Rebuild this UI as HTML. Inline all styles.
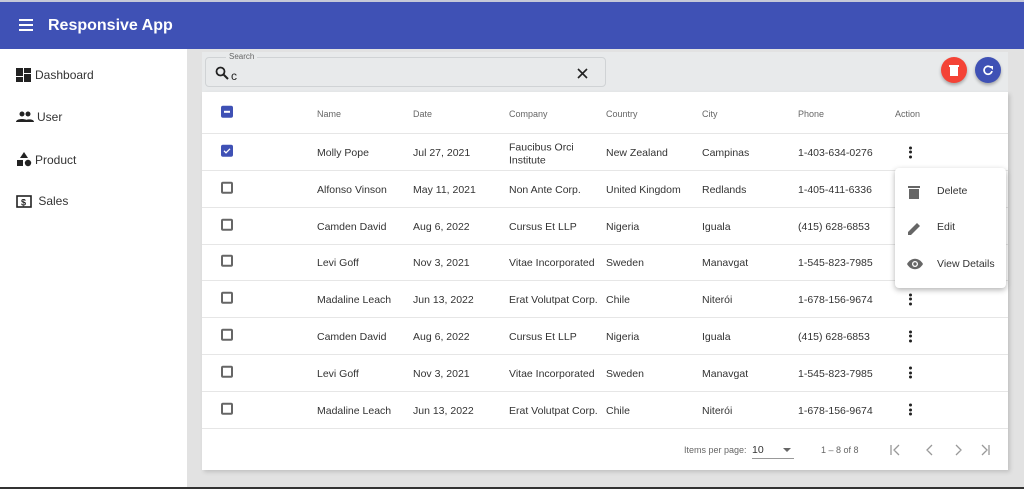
<!DOCTYPE html><html><head><style>
*{box-sizing:border-box;margin:0;padding:0}
body{width:1024px;height:489px;overflow:hidden;font-family:"Liberation Sans",sans-serif;background:#e3e3e3;position:relative}
.top{position:absolute;left:0;top:0;width:1024px;height:49px;background:#3f51b5;border-top:2px solid #c5c8d8}
.top .t{position:absolute;left:48px;top:15px;color:#fff;font-size:16px;font-weight:bold}
.side{position:absolute;left:0;top:49px;width:187px;height:440px;background:#fff}
.side div{position:absolute;left:16px;font-size:12px;color:#333;display:flex;align-items:center;gap:3px}
.main{position:absolute;left:187px;top:49px;width:837px;height:438px;background:#e2e2e2}
.bar{position:absolute;left:202px;top:52px;width:806px;height:40px;background:#e8eaeb}
.sf{position:absolute;left:205px;top:57px;width:401px;height:30px;border:1px solid #d0d3d5;border-radius:4px}
.card{position:absolute;left:202px;top:92px;width:806px;height:378px;background:#fff;box-shadow:2px 2px 4px rgba(0,0,0,.15)}
.row{position:absolute;left:0;width:806px;border-bottom:1px solid #e6e6e6;font-size:10.5px;color:#333}
.row span{position:absolute;top:50%;transform:translateY(-40%);line-height:13px}
.hd span{color:#666;font-size:9px}
.cb{position:absolute;left:19px;width:12px;height:12px;border:2px solid #666;border-radius:2px;top:50%;transform:translateY(-60%)}
.dots{position:absolute;left:707px;top:50%;transform:translateY(-50%);width:3px}
.dots i{display:block;width:3px;height:3px;background:#222;border-radius:50%;margin:1.5px 0}
.menu{position:absolute;left:895px;top:168px;width:111px;height:120px;background:#fff;border-radius:4px;box-shadow:0 2px 6px rgba(0,0,0,.3)}
.menu div{position:absolute;left:42px;font-size:10.5px;color:#333}
.fab{position:absolute;top:57px;width:26px;height:26px;border-radius:50%;box-shadow:0 2px 3px rgba(0,0,0,.3)}
</style></head><body>
<div class="top"><svg style="position:absolute;left:19px;top:17px" width="14" height="12"><rect y="0" width="14" height="2" fill="#fff"/><rect y="5" width="14" height="2" fill="#fff"/><rect y="10" width="14" height="2" fill="#fff"/></svg><div class="t">Responsive App</div></div>
<div class="side">
<div style="top:19px"><svg width="16" height="14"><rect x="0" y="0" width="7" height="8" fill="#222"/><rect x="0" y="9" width="7" height="5" fill="#222"/><rect x="8" y="0" width="7" height="5" fill="#222"/><rect x="8" y="6" width="7" height="8" fill="#222"/></svg>Dashboard</div>
<div style="top:61px"><svg width="18" height="12"><circle cx="6" cy="3" r="2.5" fill="#222"/><circle cx="12" cy="3" r="2.5" fill="#222"/><path d="M0 11c0-4 12-4 12 0zM8 11c0-3 10-4 10 0z" fill="#222"/></svg>User</div>
<div style="top:103px"><svg width="16" height="15"><path d="M8 0l4 6H4z" fill="#222"/><rect x="1" y="8" width="6" height="6" fill="#222"/><circle cx="12" cy="11" r="3.2" fill="#222"/></svg>Product</div>
<div style="top:145px"><svg width="16" height="13"><rect x="1" y="1" width="14" height="11" fill="none" stroke="#222" stroke-width="1.6"/><text x="5" y="10.5" font-size="9" font-weight="bold" fill="#222" font-family="Liberation Sans">$</text></svg>&nbsp;Sales</div>
</div>
<div class="main"></div>
<div class="bar"></div>
<div class="sf"><span style="position:absolute;left:20px;top:-6px;background:#e8eaeb;padding:0 3px;font-size:8px;color:#666">Search</span>
<svg style="position:absolute;left:9px;top:8px" width="14" height="14"><circle cx="5.5" cy="5.5" r="4" fill="none" stroke="#222" stroke-width="1.8"/><path d="M8.5 8.5l4.5 4.5" stroke="#222" stroke-width="2"/></svg>
<span style="position:absolute;left:25px;top:11px;font-size:12px;color:#222">c</span>
<svg style="position:absolute;left:371px;top:10px" width="11" height="11"><path d="M1 1l9 9M10 1l-9 9" stroke="#222" stroke-width="1.6"/></svg></div>
<div class="fab" style="left:941px;background:#f44336"><svg style="position:absolute;left:8px;top:7px" width="10" height="12"><rect x="0" y="1" width="10" height="2" fill="#fff"/><rect x="1" y="3" width="8" height="9" fill="#fff"/></svg></div>
<div class="fab" style="left:975px;background:#3f51b5"><svg style="position:absolute;left:7px;top:7px" width="12" height="12"><path d="M9 3.5A4 4 0 1 0 10 7" fill="none" stroke="#fff" stroke-width="1.7"/><path d="M7 2h4v4z" fill="#fff"/></svg></div>
<div class="card">
<div class="row hd" style="top:0;height:42px"><div class="cb" style="background:#3f51b5;border-color:#3f51b5"><div style="position:absolute;left:1px;top:3px;width:6px;height:2px;background:#fff"></div></div>
<span style="left:115px">Name</span><span style="left:211px">Date</span><span style="left:307px">Company</span><span style="left:404px">Country</span><span style="left:500px">City</span><span style="left:596px">Phone</span><span style="left:693px">Action</span></div>
<div id="rows"></div>
<div style="position:absolute;top:337px;left:0;width:806px;height:41px;font-size:9px;color:#666">
<span style="position:absolute;left:482px;top:16px">Items per page:</span>
<span style="position:absolute;left:550px;top:15px;font-size:10.5px;color:#333">10</span>
<div style="position:absolute;left:550px;top:29px;width:42px;border-bottom:1px solid #999"></div>
<div style="position:absolute;left:581px;top:19px;border:4px solid transparent;border-top:4px solid #666"></div>
<span style="position:absolute;left:619px;top:16px">1 – 8 of 8</span>
<svg style="position:absolute;left:688px;top:15px" width="100" height="12" fill="none" stroke="#999" stroke-width="1.3"><path d="M1 1v10M9 1l-5 5 5 5M42 1l-5 5 5 5M66 1l5 5-5 5M92 1l5 5-5 5M99 1v10"/></svg>
</div>
</div>
<div class="menu">
<svg style="position:absolute;left:13px;top:17px" width="12" height="14"><rect x="0" y="1" width="12" height="2" fill="#666"/><rect x="1" y="4" width="10" height="10" fill="#666"/></svg><div style="top:17px">Delete</div>
<svg style="position:absolute;left:12px;top:53px" width="15" height="15"><path d="M1 11l9-9 3 3-9 9H1z" fill="#666"/></svg><div style="top:53px">Edit</div>
<svg style="position:absolute;left:11px;top:90px" width="18" height="12"><path d="M1 6C5 -1 13 -1 17 6C13 13 5 13 1 6z" fill="#666"/><circle cx="9" cy="6" r="3" fill="#fff"/><circle cx="9" cy="6" r="1.7" fill="#666"/></svg><div style="top:90px">View Details</div>
</div>
<div style="position:absolute;left:0;top:487px;width:1024px;height:2px;background:#333"></div>
<script>
var d=[["Molly Pope","Jul 27, 2021","Faucibus Orci<br>Institute","New Zealand","Campinas","1-403-634-0276"],
["Alfonso Vinson","May 11, 2021","Non Ante Corp.","United Kingdom","Redlands","1-405-411-6336"],
["Camden David","Aug 6, 2022","Cursus Et LLP","Nigeria","Iguala","(415) 628-6853"],
["Levi Goff","Nov 3, 2021","Vitae Incorporated","Sweden","Manavgat","1-545-823-7985"],
["Madaline Leach","Jun 13, 2022","Erat Volutpat Corp.","Chile","Niterói","1-678-156-9674"],
["Camden David","Aug 6, 2022","Cursus Et LLP","Nigeria","Iguala","(415) 628-6853"],
["Levi Goff","Nov 3, 2021","Vitae Incorporated","Sweden","Manavgat","1-545-823-7985"],
["Madaline Leach","Jun 13, 2022","Erat Volutpat Corp.","Chile","Niterói","1-678-156-9674"]];
var xs=[115,211,307,404,500,596],h="";
d.forEach(function(r,i){var top=42+i*36.8;h+='<div class="row" style="top:'+top+'px;height:37px">';
h+= i==0?'<div class="cb" style="background:#3f51b5;border-color:#3f51b5"><svg style="position:absolute;left:0;top:0" width="8" height="8"><path d="M1 4l2 2 4-4" stroke="#fff" stroke-width="1.3" fill="none"/></svg></div>':'<div class="cb"></div>';
r.forEach(function(c,j){h+='<span style="left:'+xs[j]+'px">'+c+'</span>'});
if(i<1||i>3)h+='<div class="dots"><i></i><i></i><i></i></div>';
h+='</div>'});
document.getElementById('rows').innerHTML=h;
</script>
</body></html>
